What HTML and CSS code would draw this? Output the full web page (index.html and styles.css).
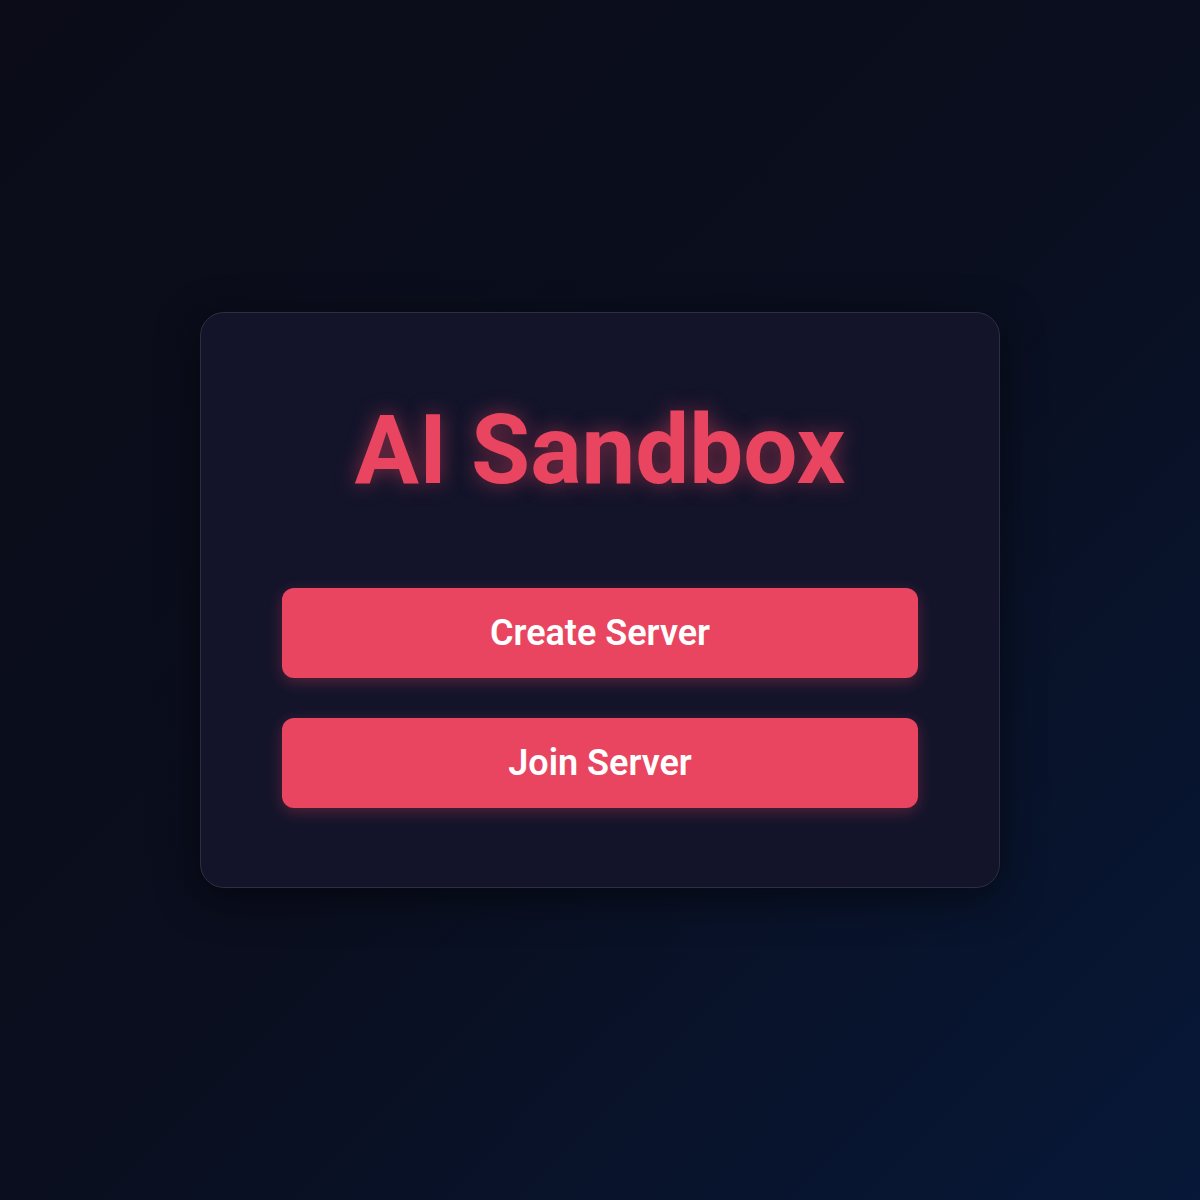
FILE: index.html
```html
<!DOCTYPE html>
<html lang="en">
<head>
<meta charset="UTF-8">
<meta name="viewport" content="width=device-width, initial-scale=1.0">
<title>AI Sandbox</title>
<link rel="stylesheet" href="styles.css">
</head>
<body>
  <div class="menu-card">
    <h1>AI Sandbox</h1>
    <div class="menu-buttons">
      <button class="menu-btn">Create Server</button>
      <button class="menu-btn">Join Server</button>
    </div>
  </div>
</body>
</html>
```

FILE: styles.css
```css
* {
  box-sizing: border-box;
}
html, body {
  height: 100%;
}
body {
  margin: 0;
  padding: 0;
  font-family: Roboto, "Liberation Sans", sans-serif;
  background: linear-gradient(135deg, #0b0c18 0%, #0a0e1e 50%, #071838 100%);
  display: flex;
  align-items: center;
  justify-content: center;
}
.menu-card {
  width: 800px;
  padding: 81px 81px 79px;
  background-color: #13142a;
  border: 1px solid #2c2e42;
  border-radius: 24px;
  box-shadow: 0 10px 40px rgba(0, 0, 0, 0.5);
  text-align: center;
}
h1 {
  margin: 0 0 82px;
  font-size: 96px;
  font-weight: 700;
  line-height: 1.17;
  color: #e94560;
  text-shadow: 0 0 20px rgba(233, 69, 96, 0.5);
}
.menu-buttons {
  display: flex;
  flex-direction: column;
  gap: 40px;
}
.menu-btn {
  height: 90px;
  font-family: Roboto, "Liberation Sans", sans-serif;
  font-size: 36px;
  font-weight: 600;
  color: #fff;
  background-color: #e94560;
  border: none;
  border-radius: 12px;
  box-shadow: 0 4px 15px rgba(233, 69, 96, 0.3);
  cursor: pointer;
}
```
